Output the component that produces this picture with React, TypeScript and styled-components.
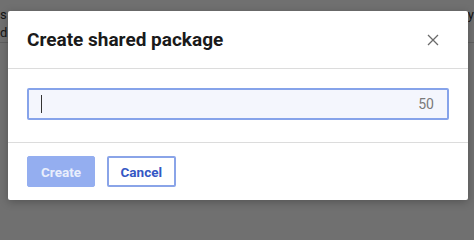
import React from 'react'
import styled, { createGlobalStyle } from 'styled-components'

const GlobalStyle = createGlobalStyle`
  html, body {
    margin: 0;
    padding: 0;
    background: #6f6f6f;
  }
  body {
    font-family: Roboto, 'Liberation Sans', Arial, sans-serif;
  }
`

const Screen = styled.div`
  position: relative;
  width: 100%;
  height: 100vh;
  overflow: hidden;
  background: #ffffff;
`

const Page = styled.div`
  display: flex;
  flex-direction: column;
  padding: 6px 0 0 0;
  color: #333;
  font-size: 13px;
`

const PageLine = styled.div<{ $border?: boolean }>`
  display: flex;
  justify-content: space-between;
  height: 18px;
  line-height: 18px;
  border-bottom: ${(p) => (p.$border ? '1px solid #d8d8d8' : 'none')};
  white-space: nowrap;
`

const Overlay = styled.div`
  position: absolute;
  inset: 0;
  background: rgba(0, 0, 0, 0.56);
  display: flex;
  align-items: flex-start;
  padding: 11px 6px 0 8px;
`

const Dialog = styled.div`
  flex: 1;
  height: 189px;
  display: flex;
  flex-direction: column;
  background: #ffffff;
  border-radius: 2px;
  box-shadow: 0 2px 8px rgba(0, 0, 0, 0.25);
`

const Header = styled.div`
  height: 57px;
  display: flex;
  align-items: center;
  justify-content: space-between;
  padding: 0 29px 0 19px;
  border-bottom: 1px solid #dcdcdc;
`

const Title = styled.h2`
  margin: 0;
  font-size: 19px;
  font-weight: 700;
  color: #1a1a1a;
`

const CloseButton = styled.button`
  border: none;
  background: none;
  padding: 0;
  width: 12px;
  height: 12px;
  display: flex;
  color: #6a6a6a;
  cursor: pointer;
`

const Body = styled.div`
  padding: 19px 19px 22px 19px;
  border-bottom: 1px solid #dcdcdc;
`

const InputBox = styled.div`
  height: 32px;
  box-sizing: border-box;
  display: flex;
  align-items: center;
  justify-content: space-between;
  padding: 0 13px 0 12px;
  background: #f4f6fd;
  border: 2px solid #86a3ea;
  border-radius: 2px;
`

const Caret = styled.span`
  width: 1px;
  height: 18px;
  background: #333;
`

const Counter = styled.span`
  font-size: 14px;
  color: #7a7a7a;
`

const Footer = styled.div`
  flex: 1;
  display: flex;
  align-items: center;
  gap: 12px;
  padding: 0 19px;
`

const Button = styled.button<{ $variant: 'primary' | 'secondary' }>`
  height: 31px;
  box-sizing: border-box;
  padding: 0 ${(p) => (p.$variant === 'primary' ? '13px' : '11.5px')};
  font-family: Roboto, 'Liberation Sans', Arial, sans-serif;
  font-size: 13.5px;
  font-weight: 700;
  border-radius: 2px;
  cursor: pointer;
  background: ${(p) => (p.$variant === 'primary' ? '#94aef0' : '#ffffff')};
  color: ${(p) => (p.$variant === 'primary' ? '#e9eefc' : '#3457c4')};
  border: ${(p) => (p.$variant === 'primary' ? '1px solid #94aef0' : '2px solid #8aa4e8')};
`

const App: React.FC = () => {
  return (
    <Screen>
      <GlobalStyle />
      <Page>
        <PageLine>
          <span>s</span>
          <span>y</span>
        </PageLine>
        <PageLine $border>
          <span>d</span>
          <span />
        </PageLine>
      </Page>
      <Overlay>
        <Dialog role="dialog">
          <Header>
            <Title>Create shared package</Title>
            <CloseButton aria-label="Close">
              <svg width="12" height="12" viewBox="0 0 12 12">
                <path d="M1 1 L11 11 M11 1 L1 11" stroke="currentColor" strokeWidth="1.3" fill="none" />
              </svg>
            </CloseButton>
          </Header>
          <Body>
            <InputBox>
              <Caret />
              <Counter>50</Counter>
            </InputBox>
          </Body>
          <Footer>
            <Button $variant="primary">Create</Button>
            <Button $variant="secondary">Cancel</Button>
          </Footer>
        </Dialog>
      </Overlay>
    </Screen>
  )
}

export default App
